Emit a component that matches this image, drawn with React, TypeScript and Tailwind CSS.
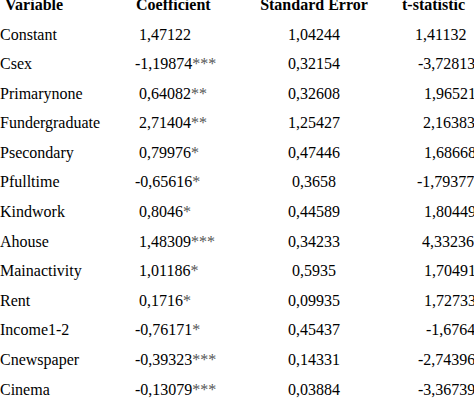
const rows = [
  { name: "Constant", coef: "1,47122", stars: "", se: "1,04244", t: "1,41132", tx: 47 },
  { name: "Csex", coef: "-1,19874", stars: "***", se: "0,32154", t: "-3,72813", tx: 50 },
  { name: "Primarynone", coef: "0,64082", stars: "**", se: "0,32608", t: "1,96521", tx: 56 },
  { name: "Fundergraduate", coef: "2,71404", stars: "**", se: "1,25427", t: "2,16383", tx: 55 },
  { name: "Psecondary", coef: "0,79976", stars: "*", se: "0,47446", t: "1,68668", tx: 56 },
  { name: "Pfulltime", coef: "-0,65616", stars: "*", se: "0,3658", t: "-1,79377", tx: 49 },
  { name: "Kindwork", coef: "0,8046", stars: "*", se: "0,44589", t: "1,80449", tx: 56 },
  { name: "Ahouse", coef: "1,48309", stars: "***", se: "0,34233", t: "4,33236", tx: 54 },
  { name: "Mainactivity", coef: "1,01186", stars: "*", se: "0,5935", t: "1,70491", tx: 56 },
  { name: "Rent", coef: "0,1716", stars: "*", se: "0,09935", t: "1,72733", tx: 56 },
  { name: "Income1-2", coef: "-0,76171", stars: "*", se: "0,45437", t: "-1,6764", tx: 58 },
  { name: "Cnewspaper", coef: "-0,39323", stars: "***", se: "0,14331", t: "-2,74396", tx: 50 },
  { name: "Cinema", coef: "-0,13079", stars: "***", se: "0,03884", t: "-3,36739", tx: 50 },
];

const App = () => {
  return (
    <div className="w-[474px] h-[404px] overflow-hidden bg-white text-black font-['Liberation_Serif',serif] text-[16px]">
      <div className="-mt-[10px] flex flex-col">
        {/* header, top edge cut like the source */}
        <div className="grid grid-cols-[135px_125px_108px_140px] h-[29.58px] leading-[29.58px] font-bold whitespace-nowrap">
          <div className="pl-[5px]">Variable</div>
          <div className="pl-[1px]">Coefficient</div>
          <div className="text-center">Standard Error</div>
          <div className="pl-[34px]">t-statistic</div>
        </div>
        {rows.map((r) => (
          <div
            key={r.name}
            className="grid grid-cols-[135px_125px_108px_140px] h-[29.58px] leading-[29.58px] whitespace-nowrap"
          >
            <div>{r.name}</div>
            <div className={r.coef.startsWith("-") ? "" : "pl-[4px]"}>
              {r.coef}
              <span className="text-[#555]">{r.stars}</span>
            </div>
            <div className="text-center">{r.se}</div>
            <div style={{ paddingLeft: r.tx }}>{r.t}</div>
          </div>
        ))}
      </div>
    </div>
  );
};

export default App;
